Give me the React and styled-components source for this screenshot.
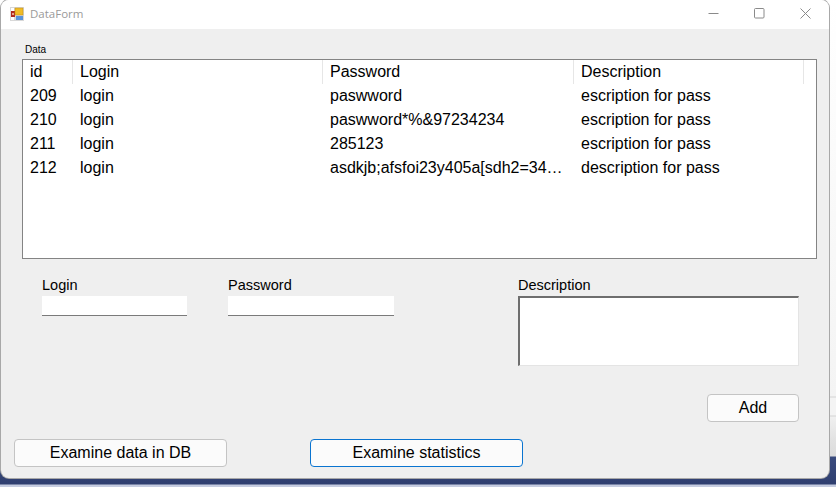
import styled, { createGlobalStyle } from 'styled-components';

const GlobalStyle = createGlobalStyle`
  html, body {
    margin: 0;
    padding: 0;
    width: 836px;
    height: 487px;
    overflow: hidden;
  }

  * {
    box-sizing: border-box;
  }
`;

const Desktop = styled.div`
  width: 836px;
  height: 487px;
  padding: 0 7px 9px 1px;
  font-family: 'Liberation Sans', Arial, sans-serif;
  color: #000000;
  background:
    linear-gradient(
      to bottom,
      #ffffff 0,
      #f4f4f4 396px,
      #d4d4d4 397px,
      #f4f4f4 398px,
      #f4f4f4 415px,
      #d4d4d4 416px,
      #f0f0f0 417px,
      #e2e2e2 440px,
      #dcdcdc 456px,
      #3a4b7d 457px,
      #2f3f70 484px,
      #c5cce0 485px
    );
`;

const Window = styled.div`
  display: flex;
  flex-direction: column;
  width: 828px;
  height: 478px;
  background-color: #efefef;
  border-radius: 8px;
  box-shadow: 0 0 0 1px #a8a8a8;
  overflow: hidden;
`;

const TitleBar = styled.div`
  display: flex;
  align-items: center;
  flex: 0 0 29px;
  height: 29px;
  padding: 0 18px 2px 9px;
  gap: 6px;
  background-color: #ffffff;
`;

const Title = styled.span`
  flex: 1;
  font-family: 'Open Sans', sans-serif;
  font-size: 11.5px;
  color: #9a9a9a;
`;

const WindowControls = styled.div`
  display: flex;
  align-items: center;
  gap: 35px;
`;

const Body = styled.div`
  display: flex;
  flex-direction: column;
  flex: 1;
  padding: 14px 30px 0 13px;
`;

const DataSection = styled.section`
  display: flex;
  flex-direction: column;
  width: 795px;
  margin: 0 0 0 8px;
`;

const GroupLabel = styled.span`
  height: 16px;
  padding-left: 3px;
  font-size: 10px;
  line-height: 13px;
`;

const Table = styled.div`
  display: flex;
  flex-direction: column;
  height: 200px;
  background-color: #ffffff;
  border: 1px solid #848484;
  overflow: hidden;
`;

const Row = styled.div`
  display: grid;
  grid-template-columns: 50px 250px 251px 230px;
  flex: 0 0 24px;
  height: 24px;
`;

const Cell = styled.div`
  padding: 0 7px;
  font-size: 16px;
  line-height: 24px;
  white-space: nowrap;
  overflow: hidden;
  text-overflow: ellipsis;
  border-right: ${(props) => (props.$header ? '1px solid #e6e6e6' : 'none')};
`;

const Fields = styled.div`
  display: flex;
  margin: 17px 0 0 28px;
`;

const Field = styled.label`
  display: flex;
  flex-direction: column;
  width: ${(props) => props.$width}px;
  margin-right: ${(props) => props.$gap}px;
  font-size: 14.5px;
  line-height: 20px;
`;

const FieldLabel = styled.span`
  height: 20px;
  line-height: 19px;
`;

const TextInput = styled.div`
  height: 20px;
  background-color: #ffffff;
  border-bottom: 1px solid #7a7a7a;
`;

const TextArea = styled.div`
  width: 281px;
  height: 70px;
  background-color: #ffffff;
  border-style: solid;
  border-width: 2px 1px 1px 2px;
  border-color: #6e6e6e #e4e4e4 #e4e4e4 #6e6e6e;
`;

const AddRow = styled.div`
  display: flex;
  justify-content: flex-end;
  margin-top: 28px;
`;

const Button = styled.button`
  width: ${(props) => props.$width}px;
  height: 28px;
  padding: 0;
  font-family: 'Liberation Sans', Arial, sans-serif;
  font-size: 16px;
  color: #000000;
  background-color: #fbfbfb;
  border: 1px solid ${(props) => (props.$focused ? '#0a74d0' : '#c4c4c4')};
  border-radius: 4px;
`;

const BottomRow = styled.div`
  display: flex;
  gap: 83px;
  margin-top: 17px;
`;

const columns = ['id', 'Login', 'Password', 'Description'];

const rows = [
  ['209', 'login', 'paswword', 'escription for pass'],
  ['210', 'login', 'paswword*%&97234234', 'escription for pass'],
  ['211', 'login', '285123', 'escription for pass'],
  ['212', 'login', 'asdkjb;afsfoi23y405a[sdh2=34u8y2h3', 'description for pass'],
];

function AppIcon() {
  return (
    <svg width="14" height="14" viewBox="0 0 14 14">
      <rect x="0" y="0" width="14" height="14" fill="#d8d8d8" />
      <rect x="1" y="1" width="3" height="3" fill="#ffffff" />
      <rect x="1" y="10" width="3" height="3" fill="#ffffff" />
      <rect x="1" y="4" width="4" height="6" fill="#b02a20" />
      <rect x="2" y="6" width="2" height="2" fill="#e8a090" />
      <rect x="5" y="1" width="8" height="7" fill="#f0bc28" stroke="#c08a10" strokeWidth="0.5" />
      <rect x="6" y="9" width="7" height="4" fill="#5a94dc" />
    </svg>
  );
}

function WindowIcon({ type }) {
  return (
    <svg width="11" height="11" viewBox="0 0 11 11" fill="none" stroke="#8a8a8a" strokeWidth="1">
      {type === 'min' && <path d="M0.5 5.5H10.5" />}
      {type === 'max' && <rect x="0.5" y="0.5" width="9.5" height="9.5" rx="1" />}
      {type === 'close' && <path d="M0.5 0.5L10.5 10.5M10.5 0.5L0.5 10.5" />}
    </svg>
  );
}

function App() {
  return (
    <Desktop>
      <GlobalStyle />
      <Window>
        <TitleBar>
          <AppIcon />
          <Title>DataForm</Title>
          <WindowControls>
            <WindowIcon type="min" />
            <WindowIcon type="max" />
            <WindowIcon type="close" />
          </WindowControls>
        </TitleBar>
        <Body>
          <DataSection>
            <GroupLabel>Data</GroupLabel>
            <Table>
              <Row>
                {columns.map((name) => (
                  <Cell $header key={name}>{name}</Cell>
                ))}
              </Row>
              {rows.map((row) => (
                <Row key={row[0]}>
                  {row.map((value, i) => (
                    <Cell key={i}>{value}</Cell>
                  ))}
                </Row>
              ))}
            </Table>
          </DataSection>
          <Fields>
            <Field $width={146} $gap={41}>
              <FieldLabel>Login</FieldLabel>
              <TextInput />
            </Field>
            <Field $width={167} $gap={124}>
              <FieldLabel>Password</FieldLabel>
              <TextInput />
            </Field>
            <Field $width={281} $gap={0}>
              <FieldLabel>Description</FieldLabel>
              <TextArea />
            </Field>
          </Fields>
          <AddRow>
            <Button $width={92}>Add</Button>
          </AddRow>
          <BottomRow>
            <Button $width={213}>Examine data in DB</Button>
            <Button $width={213} $focused>Examine statistics</Button>
          </BottomRow>
        </Body>
      </Window>
    </Desktop>
  );
}

export default App;
